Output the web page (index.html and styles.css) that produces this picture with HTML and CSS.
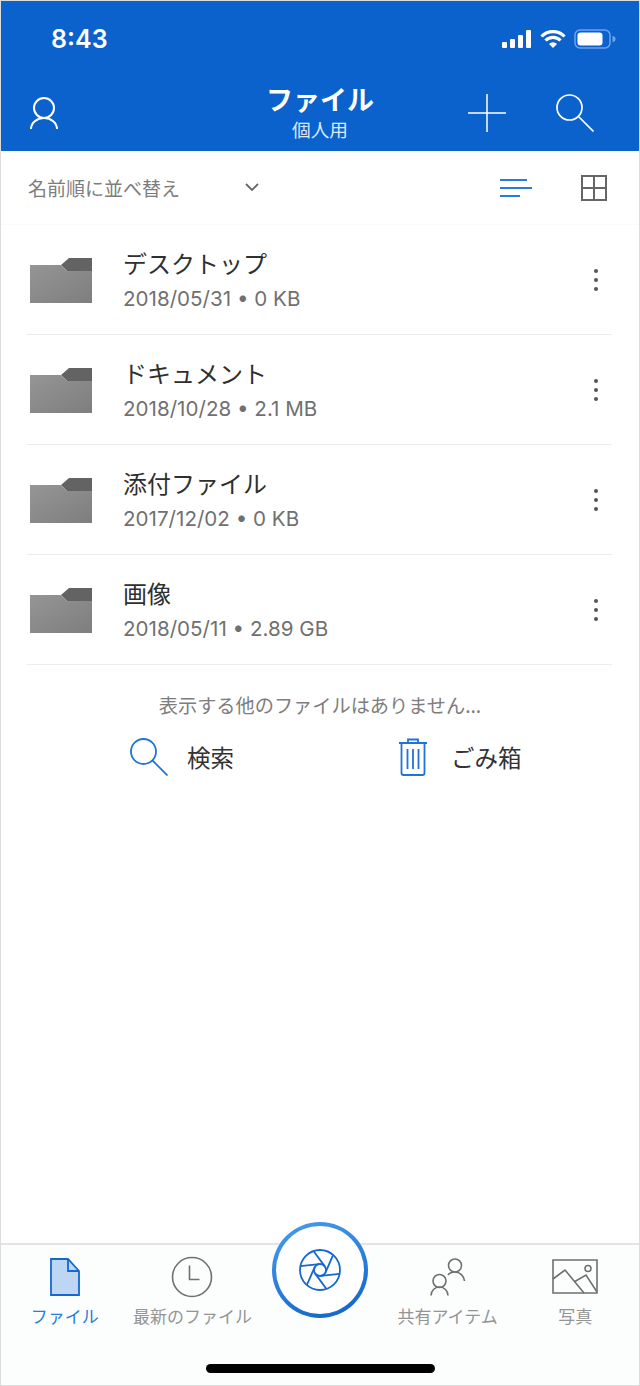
FILE: index.html
```html
<!DOCTYPE html>
<html lang="ja">
<head>
    <meta charset="UTF-8">
    <meta name="viewport" content="width=device-width, initial-scale=1.0">
    <title>ファイル</title>
    <link rel="stylesheet" href="styles.css">
</head>
<body>

    <div class="phone">
        <header class="top">
            <div class="status">
                <span class="clock">8:43</span>
                <div class="status-icons">
                    <svg width="32" height="18" viewBox="0 0 32 18" fill="#fff">
                        <rect x="1" y="12" width="5" height="6" rx="1"/>
                        <rect x="9" y="9" width="5" height="9" rx="1"/>
                        <rect x="17" y="5" width="5" height="13" rx="1"/>
                        <rect x="25" y="0" width="5" height="18" rx="1"/>
                    </svg>
                    <svg width="26" height="18" viewBox="0 0 26 18" fill="none" stroke="#fff" stroke-width="3.200">
                        <path d="M1.500 6.500a16 16 0 0 1 23 0"/>
                        <path d="M5.500 10.500a10.500 10.500 0 0 1 15 0"/>
                        <path d="M13 18l-4-4a5.500 5.500 0 0 1 8 0z" fill="#fff" stroke="none"/>
                    </svg>
                    <svg class="battery" width="42" height="20" viewBox="0 0 42 20">
                        <rect x="1" y="1" width="35" height="18" rx="5" fill="none" stroke="#6ea3e8" stroke-width="1.500"/>
                        <rect x="3.500" y="3.500" width="25" height="13" rx="3" fill="#fff"/>
                        <path d="M38.500 7a3 3 0 0 1 0 6z" fill="#6ea3e8"/>
                    </svg>
                </div>
            </div>
            <div class="titlebar">
                <svg class="top-user" width="28" height="33" viewBox="0 0 28 33" fill="none" stroke="#fff" stroke-width="2">
                    <circle cx="14" cy="11" r="10"/>
                    <path d="M1 32a13 11 0 0 1 26 0"/>
                </svg>
                <div class="heading">
                    <h1>ファイル</h1>
                    <p>個人用</p>
                </div>
                <div class="top-actions">
                    <svg width="38" height="38" viewBox="0 0 38 38" stroke="#fff" stroke-width="1.500">
                        <path d="M19 0v38M0 19h38"/>
                    </svg>
                    <svg width="38" height="38" viewBox="0 0 38 38" fill="none" stroke="#fff" stroke-width="1.700">
                        <circle cx="13.500" cy="13.500" r="12.500"/>
                        <path d="M22.500 22.500L37.500 37.500"/>
                    </svg>
                </div>
            </div>
        </header>

        <div class="sortbar">
            <span class="sort-label">名前順に並べ替え</span>
            <svg class="chevron" width="14" height="9" viewBox="0 0 14 9" fill="none" stroke="#666" stroke-width="1.800">
                <path d="M1 1l6 6 6-6"/>
            </svg>
            <svg class="sort-lines" width="32" height="20" viewBox="0 0 32 20" stroke="#2a7bdc" stroke-width="2">
                <path d="M0 2h27M0 10h32M0 18h20"/>
            </svg>
            <svg width="26" height="26" viewBox="0 0 26 26" fill="none" stroke="#666" stroke-width="2">
                <path d="M1 1h24v24H1zM13 1v24M1 13h24"/>
            </svg>
        </div>

        <ul class="files">
            <li class="file">
                <svg class="folder" width="62" height="46" viewBox="0 0 62 46"><use href="#folder-icon"/></svg>
                <div class="file-text">
                    <div class="file-name">デスクトップ</div>
                    <div class="file-meta">2018/05/31 • 0 KB</div>
                </div>
                <div class="more"><i></i><i></i><i></i></div>
            </li>
            <li class="file">
                <svg class="folder" width="62" height="46" viewBox="0 0 62 46"><use href="#folder-icon"/></svg>
                <div class="file-text">
                    <div class="file-name">ドキュメント</div>
                    <div class="file-meta">2018/10/28 • 2.1 MB</div>
                </div>
                <div class="more"><i></i><i></i><i></i></div>
            </li>
            <li class="file">
                <svg class="folder" width="62" height="46" viewBox="0 0 62 46"><use href="#folder-icon"/></svg>
                <div class="file-text">
                    <div class="file-name">添付ファイル</div>
                    <div class="file-meta">2017/12/02 • 0 KB</div>
                </div>
                <div class="more"><i></i><i></i><i></i></div>
            </li>
            <li class="file">
                <svg class="folder" width="62" height="46" viewBox="0 0 62 46"><use href="#folder-icon"/></svg>
                <div class="file-text">
                    <div class="file-name">画像</div>
                    <div class="file-meta">2018/05/11 • 2.89 GB</div>
                </div>
                <div class="more"><i></i><i></i><i></i></div>
            </li>
        </ul>

        <p class="no-more">表示する他のファイルはありません...</p>

        <div class="links">
            <div class="link link-search">
                <svg width="38" height="38" viewBox="0 0 38 38" fill="none" stroke="#1f74d6" stroke-width="1.800">
                    <circle cx="13.500" cy="13.500" r="12.500"/>
                    <path d="M22.500 22.500L37.500 37.500"/>
                </svg>
                <span>検索</span>
            </div>
            <div class="link link-trash">
                <svg width="30" height="38" viewBox="0 0 30 38" fill="none" stroke="#1f74d6" stroke-width="1.800">
                    <path d="M1 5h28M10 5V1.500h10V5M3.500 5v30a2 2 0 0 0 2 2h19a2 2 0 0 0 2-2V5M9.500 11v20M15 11v20M20.500 11v20"/>
                </svg>
                <span>ごみ箱</span>
            </div>
        </div>

        <div class="spacer"></div>

        <nav class="tabs">
            <div class="tab active">
                <div class="tab-icon">
                    <svg width="30" height="38" viewBox="0 0 30 38">
                        <path d="M1 1h17l11 12v24H1z" fill="#bcd6f3" stroke="#1668cf" stroke-width="1.800"/>
                        <path d="M18 1v12h11" fill="none" stroke="#1668cf" stroke-width="1.800"/>
                    </svg>
                </div>
                <span>ファイル</span>
            </div>
            <div class="tab">
                <div class="tab-icon">
                    <svg width="42" height="42" viewBox="0 0 42 42" fill="none" stroke="#6f6f6f" stroke-width="1.600">
                        <circle cx="21" cy="21" r="19.500"/>
                        <path d="M18.500 9.500v14h10"/>
                    </svg>
                </div>
                <span>最新のファイル</span>
            </div>
            <div class="tab"></div>
            <div class="tab">
                <div class="tab-icon">
                    <svg width="36" height="38" viewBox="0 0 36 38" fill="none" stroke="#6f6f6f" stroke-width="1.600">
                        <circle cx="25" cy="7.500" r="6.500"/>
                        <path d="M18 17c1.500-2 4-3 7-3 5 0 9 4 9.500 9"/>
                        <circle cx="9.500" cy="23" r="6.500"/>
                        <path d="M1 37.500a8.500 8.500 0 0 1 17 0"/>
                    </svg>
                </div>
                <span>共有アイテム</span>
            </div>
            <div class="tab">
                <div class="tab-icon">
                    <svg width="46" height="36" viewBox="0 0 46 36" fill="none" stroke="#6f6f6f" stroke-width="1.600">
                        <path d="M1 1h44v33H1z"/>
                        <circle cx="36" cy="9.500" r="3"/>
                        <path d="M1 20l12-9 19 23M22 23l12-7 11 17"/>
                    </svg>
                </div>
                <span>写真</span>
            </div>
        </nav>

        <div class="camera">
            <svg width="44" height="44" viewBox="0 0 44 44" fill="none" stroke="#1668cf" stroke-width="1.800">
                <circle cx="22" cy="22" r="20"/>
                <circle cx="22" cy="22" r="6"/>
                <path d="M15.500 3L26.800 18.400"/>
                <path d="M15.500 3L26.800 18.400" transform="rotate(60 22 22)"/>
                <path d="M15.500 3L26.800 18.400" transform="rotate(120 22 22)"/>
                <path d="M15.500 3L26.800 18.400" transform="rotate(180 22 22)"/>
                <path d="M15.500 3L26.800 18.400" transform="rotate(240 22 22)"/>
                <path d="M15.500 3L26.800 18.400" transform="rotate(300 22 22)"/>
            </svg>
        </div>

        <div class="home-bar"></div>
    </div>

    <svg class="defs" width="0" height="0">
        <defs>
            <linearGradient id="folder-fill" x1="0" y1="0" x2="1" y2="1">
                <stop offset="0" stop-color="#959595"/>
                <stop offset="1" stop-color="#7e7e7e"/>
            </linearGradient>
            <g id="folder-icon">
                <path d="M31 8l8-7h23v15H39z" fill="#636363"/>
                <path d="M0 8h31l6 6h25v32H0z" fill="url(#folder-fill)"/>
            </g>
        </defs>
    </svg>

</body>
</html>
```

FILE: styles.css
```css
* {
    box-sizing: border-box;
}

body {
    margin: 0;
    font-family: "Noto Sans CJK JP", "Liberation Sans", sans-serif;
    background: #fff;
    color: #333;
}

.phone {
    position: relative;
    width: 640px;
    height: 1386px;
    display: flex;
    flex-direction: column;
    border: 1px solid #dcdcdc;
    overflow: hidden;
}

.top {
    background: #0b62cd;
    height: 150px;
    color: #fff;
    flex-shrink: 0;
}

.status {
    display: flex;
    justify-content: space-between;
    align-items: center;
    height: 76px;
    padding: 0 23px 0 50px;
}

.clock {
    font-family: Inter, "Liberation Sans", sans-serif;
    font-size: 25px;
    font-weight: 600;
}

.status-icons {
    display: flex;
    align-items: center;
    gap: 7px;
}

.battery {
    margin-left: 1px;
}

.titlebar {
    display: flex;
    align-items: flex-start;
    position: relative;
    height: 74px;
    padding: 17px 45px 0 29px;
}

.top-user {
    margin-top: 3px;
}

.heading {
    position: absolute;
    left: 0;
    right: 0;
    top: 3px;
    text-align: center;
}

.heading h1 {
    margin: 0;
    font-size: 27px;
    line-height: 38px;
    font-weight: 700;
}

.heading p {
    margin: 0;
    font-size: 18.700px;
    line-height: 22px;
    color: #dce9f8;
}

.top-actions {
    margin-left: auto;
    display: flex;
    gap: 50px;
}

.sortbar {
    display: flex;
    align-items: center;
    height: 74px;
    padding: 0 32px 0 27px;
    border-bottom: 1px solid #fafafa;
    flex-shrink: 0;
}

.sort-label {
    font-size: 19px;
    color: #7d7d7d;
    width: 217px;
}

.chevron {
    margin-right: auto;
}

.sort-lines {
    margin-right: 49px;
}

.files {
    list-style: none;
    margin: 0;
    padding: 0 27px 0 26px;
}

.file {
    display: flex;
    align-items: center;
    height: 110px;
    padding-left: 3px;
    border-bottom: 1px solid #ececec;
}

.folder {
    flex-shrink: 0;
    margin-right: 31px;
}

.file-text {
    flex: 1;
    margin-top: -1px;
}

.file-name {
    font-size: 24px;
    line-height: 34px;
    color: #2f2f2f;
}

.file-meta {
    font-family: Inter, "Liberation Sans", sans-serif;
    font-size: 20.600px;
    line-height: 26px;
    color: #707070;
    margin-top: 6px;
}

.more {
    display: flex;
    flex-direction: column;
    gap: 5px;
    margin-right: 14px;
}

.more i {
    width: 4px;
    height: 4px;
    border-radius: 50%;
    background: #555;
}

.no-more {
    margin: 27px 0 0;
    text-align: center;
    font-size: 19.200px;
    line-height: 26px;
    color: #7d7d7d;
}

.links {
    display: flex;
    margin-top: 20px;
}

.link {
    display: flex;
    align-items: center;
    font-size: 23.500px;
    color: #333;
}

.link-search {
    margin-left: 129px;
    gap: 19px;
}

.link-trash {
    margin-left: 164px;
    gap: 23px;
}

.spacer {
    flex: 1;
}

.tabs {
    display: grid;
    grid-template-columns: repeat(5, 1fr);
    height: 142px;
    flex-shrink: 0;
    padding-top: 11px;
    background: #fcfefe;
    border-top: 2px solid #e3e3e3;
    font-size: 17px;
    color: #949494;
}

.tab {
    display: flex;
    flex-direction: column;
    align-items: center;
}

.tab-icon {
    display: flex;
    align-items: center;
    height: 42px;
}

.tab span {
    margin-top: 6px;
    line-height: 24px;
    white-space: nowrap;
}

.tab.active {
    color: #2a7bdc;
}

.camera {
    position: absolute;
    left: 271px;
    top: 1221px;
    width: 96px;
    height: 96px;
    border-radius: 50%;
    border: 4px solid transparent;
    background: linear-gradient(#fff, #fff) padding-box, linear-gradient(160deg, #4a9cf0, #0f62c8) border-box;
    display: flex;
    align-items: center;
    justify-content: center;
}

.home-bar {
    position: absolute;
    left: 205px;
    bottom: 12px;
    width: 229px;
    height: 9px;
    border-radius: 5px;
    background: #000;
}

.defs {
    position: absolute;
}
```
